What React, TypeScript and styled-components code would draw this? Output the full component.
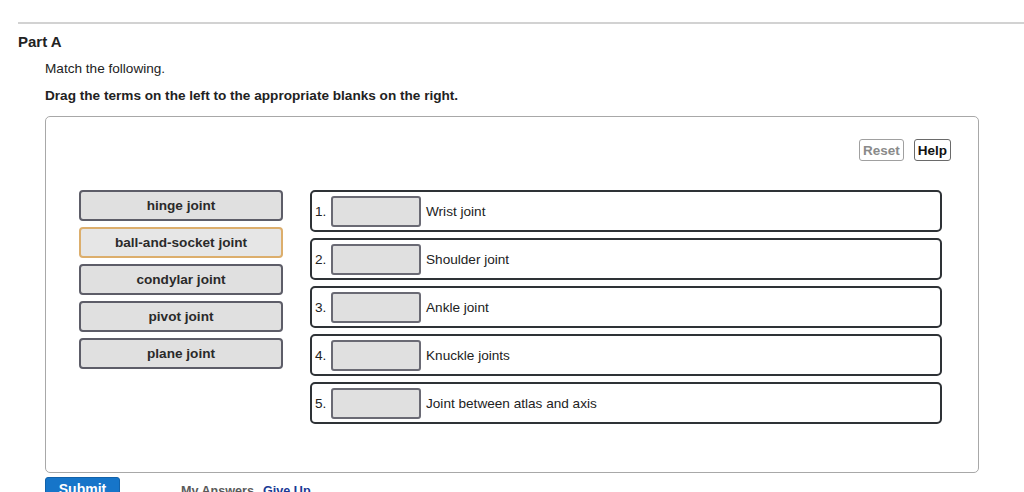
import React from 'react';
import styled, { createGlobalStyle } from 'styled-components';

const GlobalStyle = createGlobalStyle`
  html, body {
    margin: 0;
    padding: 0;
    background: #fff;
    font-family: "Liberation Sans", Arial, sans-serif;
    color: #222;
  }
`;

const Page = styled.div`
  padding-top: 22px;
  height: 492px;
  overflow: hidden;
  box-sizing: border-box;
`;

const Rule = styled.div`
  margin-left: 18px;
  height: 2px;
  background: #d2d2d2;
`;

const PartTitle = styled.h2`
  margin: 9px 0 0 18px;
  font-size: 15px;
  font-weight: bold;
  line-height: 17px;
  color: #222;
`;

const Body = styled.div`
  padding-left: 45px;
`;

const Prompt = styled.p<{ $bold?: boolean }>`
  margin: 0;
  font-size: 13.6px;
  line-height: 16px;
  font-weight: ${(p) => (p.$bold ? 'bold' : 'normal')};
  color: #222;
`;

const Instructions = styled.div`
  display: flex;
  flex-direction: column;
  gap: 11px;
  padding-top: 11px;
`;

const Panel = styled.div`
  margin-top: 12px;
  width: 934px;
  height: 357px;
  box-sizing: border-box;
  border: 1px solid #a8a8a8;
  border-radius: 5px;
  padding: 22px 27px 0 33px;
`;

const Toolbar = styled.div`
  display: flex;
  justify-content: flex-end;
  gap: 10px;
`;

const ToolButton = styled.button<{ $muted?: boolean }>`
  font-family: "Liberation Sans", Arial, sans-serif;
  font-size: 13.5px;
  font-weight: bold;
  height: 22px;
  padding: 0 3px;
  background: #fff;
  color: ${(p) => (p.$muted ? '#8a8a8a' : '#111')};
  border: 1px solid ${(p) => (p.$muted ? '#a0a0a0' : '#6a6a6a')};
  border-radius: 3px;
`;

const Board = styled.div`
  display: flex;
  gap: 27px;
  margin-top: 29px;
`;

const TermList = styled.div`
  display: flex;
  flex-direction: column;
  gap: 6px;
  width: 204px;
  flex: none;
`;

const Term = styled.div<{ $active?: boolean }>`
  height: 31px;
  box-sizing: border-box;
  display: flex;
  align-items: center;
  justify-content: center;
  background: ${(p) => (p.$active ? '#e6e6e6' : '#e0e0e0')};
  border: 2px solid ${(p) => (p.$active ? '#dcae6c' : '#5d5d68')};
  border-radius: 4px;
  font-size: 13.6px;
  font-weight: bold;
  color: #2a2a2a;
`;

const Targets = styled.div`
  display: flex;
  flex-direction: column;
  gap: 6px;
  width: 632px;
`;

const TargetRow = styled.div`
  height: 42px;
  box-sizing: border-box;
  display: flex;
  align-items: center;
  border: 2px solid #2e3236;
  border-radius: 5px;
  padding-left: 3px;
  font-size: 13.6px;
  color: #222;
`;

const Num = styled.span`
  width: 16px;
`;

const Blank = styled.div`
  width: 90px;
  height: 31px;
  box-sizing: border-box;
  background: #e0e0e0;
  border: 2px solid #6a6a74;
  border-radius: 3px;
  margin-right: 5px;
`;

const Footer = styled.div`
  display: flex;
  align-items: flex-start;
  margin-top: 4px;
`;

const SubmitButton = styled.button`
  width: 75px;
  height: 24px;
  background: #1675c9;
  border: 1px solid #1262aa;
  border-radius: 3px;
  color: #fff;
  font-family: "Liberation Sans", Arial, sans-serif;
  font-size: 14px;
  font-weight: bold;
  padding: 0;
  line-height: 20px;
`;

const FooterLink = styled.a<{ $blue?: boolean }>`
  font-size: 12.6px;
  font-weight: bold;
  line-height: 22px;
  margin-left: ${(p) => (p.$blue ? '9px' : '61px')};
  color: ${(p) => (p.$blue ? '#1a3a94' : '#5a5a5a')};
  text-decoration: none;
  padding-top: 3px;
`;

const terms = [
  'hinge joint',
  'ball-and-socket joint',
  'condylar joint',
  'pivot joint',
  'plane joint',
];

const targets = [
  'Wrist joint',
  'Shoulder joint',
  'Ankle joint',
  'Knuckle joints',
  'Joint between atlas and axis',
];

export default function App() {
  return (
    <>
      <GlobalStyle />
      <Page>
        <Rule />
        <PartTitle>Part A</PartTitle>
        <Body>
          <Instructions>
            <Prompt>Match the following.</Prompt>
            <Prompt $bold>Drag the terms on the left to the appropriate blanks on the right.</Prompt>
          </Instructions>
          <Panel>
            <Toolbar>
              <ToolButton $muted>Reset</ToolButton>
              <ToolButton>Help</ToolButton>
            </Toolbar>
            <Board>
              <TermList>
                {terms.map((t, i) => (
                  <Term key={t} $active={i === 1}>
                    {t}
                  </Term>
                ))}
              </TermList>
              <Targets>
                {targets.map((t, i) => (
                  <TargetRow key={t}>
                    <Num>{i + 1}.</Num>
                    <Blank />
                    {t}
                  </TargetRow>
                ))}
              </Targets>
            </Board>
          </Panel>
          <Footer>
            <SubmitButton>Submit</SubmitButton>
            <FooterLink>My Answers</FooterLink>
            <FooterLink $blue>Give Up</FooterLink>
          </Footer>
        </Body>
      </Page>
    </>
  );
}
